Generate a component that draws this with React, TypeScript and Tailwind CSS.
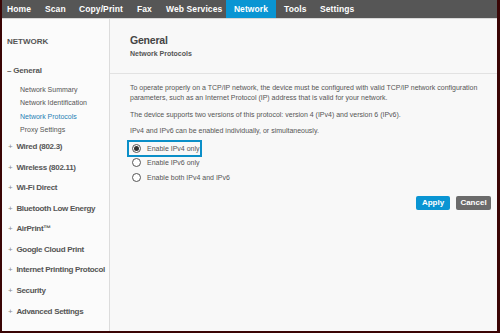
import React from 'react';

const font = { fontFamily: '"Liberation Sans", Arial, sans-serif' };

export default function App() {
  // fixed slot widths so each tab label starts where the original does
  const tabs = [
  { label: 'Home', cls: 'w-[38px]' },
  { label: 'Scan', cls: 'w-[34px]' },
  { label: 'Copy/Print', cls: 'w-[58px]' },
  { label: 'Fax', cls: 'w-[29px]' },
  { label: 'Web Services', cls: 'w-[60px]' },
  { label: 'Network', cls: 'w-[50px] justify-center bg-[#0a95d3] mr-[8px]' },
  { label: 'Tools', cls: 'w-[36px]' },
  { label: 'Settings', cls: 'w-[50px]' }];

  const subItems = ['Network Summary', 'Network Identification', 'Network Protocols', 'Proxy Settings'];
  const groups = [
  'Wired (802.3)',
  'Wireless (802.11)',
  'Wi-Fi Direct',
  'Bluetooth Low Energy',
  'AirPrint™',
  'Google Cloud Print',
  'Internet Printing Protocol',
  'Security',
  'Advanced Settings'];

  const options = ['Enable IPv4 only', 'Enable IPv6 only', 'Enable both IPv4 and IPv6'];

  return (
    <div className="w-[500px] h-[333px] bg-[#3a0505] pl-[2px] pr-[3px] pb-[2px]" style={font}>
      <div className="flex h-full flex-col bg-[#fafafa]">
        {/* top nav */}
        <div className="flex h-[19px] items-stretch border-b border-[#d8d8d8] bg-[#565656] pl-[5px]">
          {tabs.map((t) =>
          <div
            key={t.label}
            className={`flex items-center whitespace-nowrap text-[8.5px] font-bold tracking-[0.1px] text-white ${t.cls}`}>
              {t.label}
            </div>
          )}
        </div>

        <div className="flex flex-1">
          {/* sidebar */}
          <div className="w-[108px] shrink-0 border-r border-[#dcdcdc] bg-[#fbfbfb] pl-[5px] pt-[18px] text-[#555]">
            <div className="text-[8px] font-bold leading-[10px]">NETWORK</div>
            <div className="mt-[19px] text-[8px] font-bold leading-[10px] tracking-[-0.2px]">– General</div>
            <div className="mt-[7px] pl-[13px]">
              {subItems.map((s) =>
              <div
                key={s}
                className={
                s === 'Network Protocols' ?
                'whitespace-nowrap text-[7px] leading-[13.4px] text-[#1f7fb5]' :
                'whitespace-nowrap text-[7px] leading-[13.4px] text-[#555]'
                }>
                  {s}
                </div>
              )}
            </div>
            <div className="mt-[0px]">
              {groups.map((g) =>
              <div
                key={g}
                className="flex h-[20.6px] items-center whitespace-nowrap text-[8px] font-bold tracking-[-0.3px]">
                  <span className="mr-[4px] ml-[1px] font-normal text-[#888]">+</span>
                  {g}
                </div>
              )}
            </div>
          </div>

          {/* content */}
          <div className="flex-1 bg-[#f8f8f8] text-[#555]">
            <div className="border-b border-[#e2e2e2] pl-[20px] pt-[15px] pb-[14px]">
              <div className="text-[10.5px] font-bold leading-[13px] tracking-[-0.2px] text-[#444]">General</div>
              <div className="mt-[2px] text-[7px] font-bold leading-[10px]">Network Protocols</div>
            </div>
            <div className="pl-[20px] pr-[6px] pt-[9px] text-[7px] leading-[10px]">
              <p>
                To operate properly on a TCP/IP network, the device must be configured with valid TCP/IP network configuration
                <br />
                parameters, such as an Internet Protocol (IP) address that is valid for your network.
              </p>
              <p className="mt-[7px]">
                The device supports two versions of this protocol: version 4 (IPv4) and version 6 (IPv6).
              </p>
              <p className="mt-[6px]">IPv4 and IPv6 can be enabled individually, or simultaneously.</p>

              <div className="mt-[4px] ml-[-3px]">
                {options.map((o, i) =>
                <div
                  key={o}
                  className={
                  i === 0 ?
                  'mb-[-2px] flex h-[17px] w-[75px] items-center border-2 border-[#0b8fc8] pl-[3px]' :
                  'flex h-[15px] items-center pl-[5px]'
                  }>
                    <span className="flex h-[9px] w-[9px] items-center justify-center rounded-full border border-[#555] bg-white">
                      {i === 0 && <span className="h-[5px] w-[5px] rounded-full bg-[#333]" />}
                    </span>
                    <span className="ml-[6px]">{o}</span>
                  </div>
                )}
              </div>

              <div className="mt-[11px] flex justify-end gap-[6px]">
                <button className="h-[14px] w-[34px] rounded-[2px] bg-[#0a95d3] text-[8px] font-bold leading-[14px] text-white">
                  Apply
                </button>
                <button className="h-[14px] w-[35px] rounded-[2px] bg-[#6b6b6b] text-[8px] font-bold leading-[14px] text-white">
                  Cancel
                </button>
              </div>
            </div>
          </div>
        </div>
      </div>
    </div>);

}
